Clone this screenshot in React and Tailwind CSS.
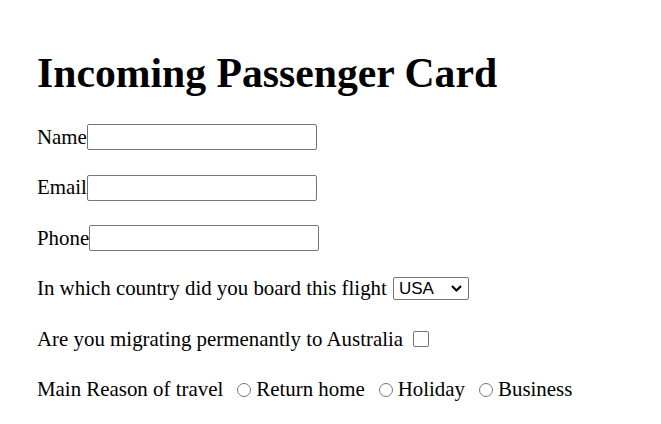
function TextInput({ label }) {
  return (
    <div className="flex items-center h-[26px]">
      <span>{label}</span>
      <input
        type="text"
        className="h-[26px] w-[230px] border border-[#767676] rounded-[2px] bg-white outline-none"
      />
    </div>
  )
}

function Radio({ label }) {
  return (
    <label className="flex items-center">
      <span className="w-[14px] h-[14px] rounded-full border border-[#767676] bg-white ml-[14px] mr-[5px]" />
      <span>{label}</span>
    </label>
  )
}

function App() {
  return (
    <div className="min-h-screen bg-white text-black font-['Liberation_Serif',serif] text-[20.9px] leading-none px-[37px] pt-[52px]">
      <h1 className="font-bold text-[41.7px] leading-[42px] mb-[30px]">Incoming Passenger Card</h1>

      <div className="flex flex-col gap-[24.5px]">
        <TextInput label="Name" />
        <TextInput label="Email" />
        <TextInput label="Phone" />

        <div className="flex items-center h-[26px]">
          <span>In which country did you board this flight</span>
          <div className="ml-[6px] flex items-center justify-between w-[76px] h-[23px] border border-[#767676] rounded-[2px] pl-[5px] pr-[5px] font-['Liberation_Sans',sans-serif] text-[17px]">
            <span>USA</span>
            <svg width="13" height="9" viewBox="0 0 13 9" fill="none">
              <path d="M2 2l4.5 4.5L11 2" stroke="black" strokeWidth="2.2" />
            </svg>
          </div>
        </div>

        <div className="flex items-center h-[26px]">
          <span>Are you migrating permenantly to Australia</span>
          <span className="ml-[10px] w-[16px] h-[16px] border border-[#767676] rounded-[2px] bg-white" />
        </div>

        <div className="flex items-center h-[26px]">
          <span>Main Reason of travel</span>
          <Radio label="Return home" />
          <Radio label="Holiday" />
          <Radio label="Business" />
        </div>
      </div>
    </div>
  )
}

export default App
